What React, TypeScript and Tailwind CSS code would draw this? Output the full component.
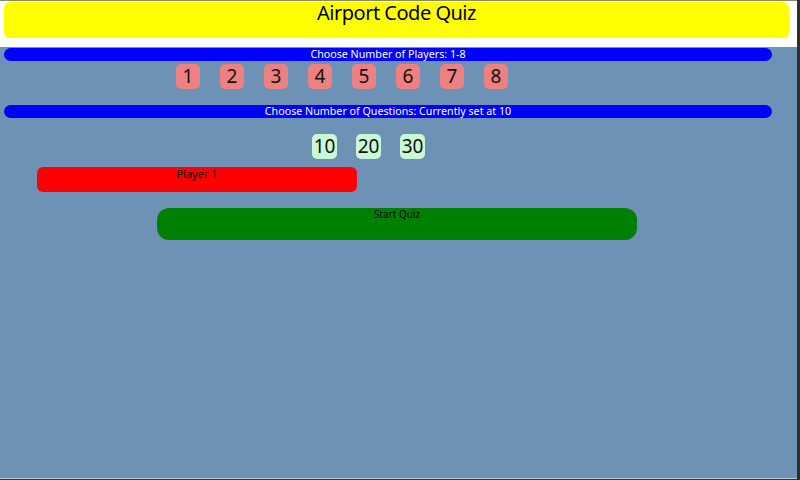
export default function App() {
  const players = [1, 2, 3, 4, 5, 6, 7, 8];
  const questions = [10, 20, 30];
  const font = { fontFamily: '"Noto Sans", "Open Sans", sans-serif' };
  return (
    <div className="w-[800px] h-[480px] flex bg-[#2e2e2e] overflow-hidden" style={font}>
      <div className="w-[797px] h-[480px] flex flex-col">
        <div className="h-[1px] bg-[#8a8a66]" />
        <div className="h-[46px] bg-white pt-[1px] pl-[4px]">
          <div className="w-[785px] h-[36px] bg-[#ffff00] rounded-[6px] flex justify-center items-start">
            <span className="text-[20px] leading-[22px] tracking-[-0.5px] text-black">Airport Code Quiz</span>
          </div>
        </div>
        <div className="flex-1 bg-[#6e92b5] flex flex-col">
          <div className="mt-[1px] ml-[4px] w-[768px] h-[13px] bg-[#0000ff] rounded-full flex justify-center items-center">
            <span className="text-[10.7px] leading-[13px] text-white">Choose Number of Players: 1-8</span>
          </div>
          <div className="mt-[3px] pl-[176px] flex gap-[20px]">
            {players.map((p) => (
              <div
                key={p}
                className="w-[24px] h-[25px] bg-[#ed8080] rounded-[5px] flex items-center justify-center text-[19px] text-[#111]"
              >
                {p}
              </div>
            ))}
          </div>
          <div className="mt-[16px] ml-[4px] w-[768px] h-[13px] bg-[#0000ff] rounded-full flex justify-center items-center">
            <span className="text-[10.7px] leading-[13px] text-white">Choose Number of Questions: Currently set at 10</span>
          </div>
          <div className="mt-[16px] pl-[312px] flex gap-[19px]">
            {questions.map((q) => (
              <div
                key={q}
                className="w-[25px] h-[25px] bg-[#c8f8d4] rounded-[5px] flex items-center justify-center text-[19px] text-[#111]"
              >
                {q}
              </div>
            ))}
          </div>
          <div className="mt-[8px] ml-[37px] w-[320px] h-[25px] bg-[#ff0000] rounded-[6px] flex justify-center">
            <span className="text-[11px] leading-[14px] text-black">Player 1</span>
          </div>
          <div className="mt-[16px] ml-[157px] w-[480px] h-[32px] bg-[#008000] rounded-[12px] flex justify-center">
            <span className="text-[10px] leading-[12px] text-black">Start Quiz</span>
          </div>
        </div>
        <div className="h-[1px] bg-[#b8c4cc]" />
        <div className="h-[1px] bg-[#3a3a3a]" />
      </div>
    </div>
  );
}
